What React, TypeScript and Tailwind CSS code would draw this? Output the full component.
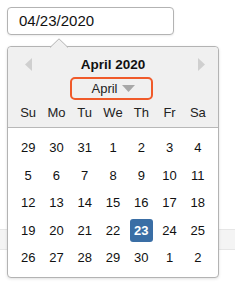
const weekdays = ['Su', 'Mo', 'Tu', 'We', 'Th', 'Fr', 'Sa'];

const weeks = [
  [29, 30, 31, 1, 2, 3, 4],
  [5, 6, 7, 8, 9, 10, 11],
  [12, 13, 14, 15, 16, 17, 18],
  [19, 20, 21, 22, 23, 24, 25],
  [26, 27, 28, 29, 30, 1, 2],
];

function Calendar() {
  return (
    <div className="absolute left-[7px] top-[46px] w-[212px] h-[232px] rounded-[4px] border border-[#b3b3b3] bg-white shadow-[0_1px_3px_rgba(0,0,0,0.12)]">
      {/* notch */}
      <svg className="absolute left-[42px] top-[-9px]" width="18" height="10" viewBox="0 0 18 10">
        <path d="M0 9.5 L9 0.8 L18 9.5" fill="#f0f0f0" stroke="#b3b3b3" strokeWidth="1" />
      </svg>
      <div className="h-[81px] rounded-t-[4px] bg-[#f0f0f0] border-b border-[#b8b8b8] flex flex-col">
        <div className="relative h-[30px] flex items-center justify-center pt-[6px]">
          <svg className="absolute left-[17px] top-[11px]" width="7" height="13" viewBox="0 0 7 13">
            <path d="M7 0 L0 6.5 L7 13 Z" fill="#cfcfcf" />
          </svg>
          <span className="text-[13.5px] font-bold text-[#111]">April 2020</span>
          <svg className="absolute right-[13px] top-[11px]" width="7" height="13" viewBox="0 0 7 13">
            <path d="M0 0 L7 6.5 L0 13 Z" fill="#cfcfcf" />
          </svg>
        </div>
        <div className="flex justify-center">
          <div className="ml-[-4px] w-[83px] h-[23px] rounded-[5px] border-2 border-[#f05a2a] flex items-center justify-center gap-[4px] pl-[4px]">
            <span className="text-[13px] text-[#222]">April</span>
            <svg width="13" height="7" viewBox="0 0 13 7">
              <path d="M0 0 L13 0 L6.5 7 Z" fill="#a8a8a8" />
            </svg>
          </div>
        </div>
        <div className="grid grid-cols-7 px-[6px] mt-[3px]">
          {weekdays.map((d) => (
            <span key={d} className="text-center text-[13px] text-[#222]">{d}</span>
          ))}
        </div>
      </div>
      <div className="px-[6px] pt-[6px]">
        {weeks.map((w, i) => (
          <div key={i} className="grid grid-cols-7 h-[27.5px]">
            {w.map((d, j) => {
              const sel = i === 3 && d === 23;
              return (
                <div key={j} className="flex items-center justify-center">
                  {sel ? (
                    <span className="w-[23px] h-[23px] rounded-[3px] bg-[#3a6ea5] text-white font-bold text-[13px] flex items-center justify-center">{d}</span>
                  ) : (
                    <span className="text-[13px] text-[#111]">{d}</span>
                  )}
                </div>
              );
            })}
          </div>
        ))}
      </div>
    </div>
  );
}

export default function App() {
  return (
    <div className="relative w-[235px] h-[294px] bg-white overflow-hidden font-['Liberation_Sans',Arial,sans-serif]">
      <div className="pt-[7px] pl-[7px]">
        <div className="w-[167px] h-[28px] rounded-[4px] border border-[#b3b3b3] bg-white flex items-center pl-[11px] shadow-[0_1px_2px_rgba(0,0,0,0.08)]">
          <span className="text-[15px] text-[#111]">04/23/2020</span>
        </div>
      </div>
      <div className="mt-[194px] h-[21px] bg-[#f4f4f4] border-y border-[#e6e6e6]" />
      <Calendar />
    </div>
  );
}
